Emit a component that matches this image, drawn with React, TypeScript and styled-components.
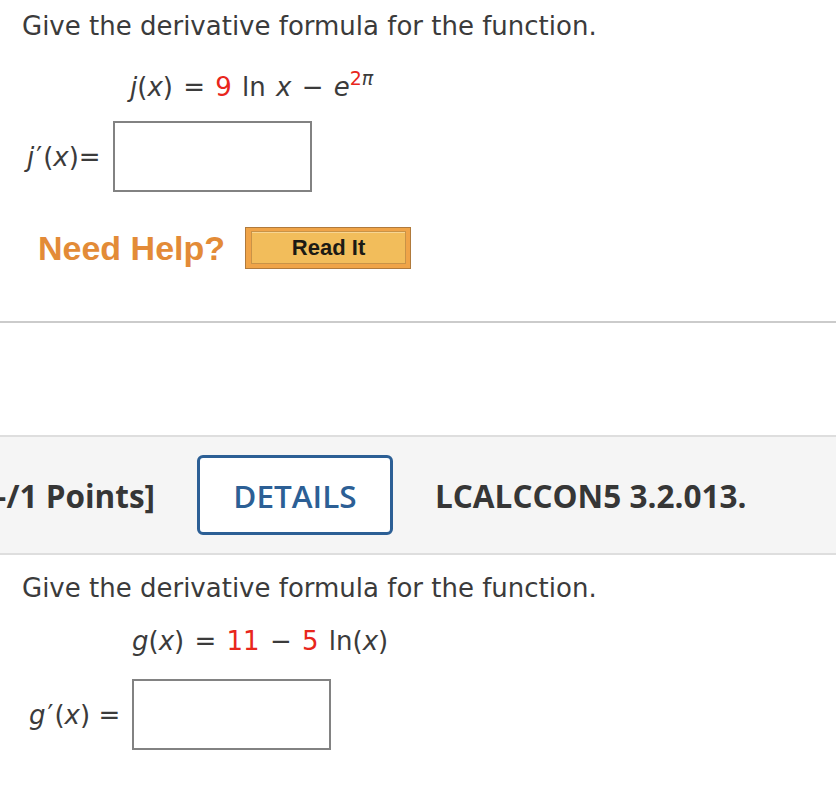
import React from "react";
import styled, { createGlobalStyle } from "styled-components";

const Global = createGlobalStyle`
  html, body { margin: 0; padding: 0; background: #fff; }
  body { font-family: "DejaVu Sans", Verdana, sans-serif; color: #3b3b3b; }
`;

const Page = styled.div`
  width: 836px;
  overflow: hidden;
`;

const Question = styled.section<{ $top: number }>`
  padding: ${(p) => p.$top}px 0 0 22px;
`;

const Prompt = styled.p`
  margin: 0;
  font-size: 26px;
  line-height: 32px;
`;

const Formula = styled.div<{ $indent: number; $gap: number }>`
  margin: ${(p) => p.$gap}px 0 0 ${(p) => p.$indent}px;
  font-size: 26px;
  line-height: 32px;
  word-spacing: 2px;
  white-space: nowrap;
`;

const I = styled.i`
  font-style: italic;
`;

const Prime = styled.span`
  margin: 0 1px 0 2px;
`;

const Red = styled.span`
  color: #e8261c;
`;

const Sup = styled.span`
  font-size: 19px;
  line-height: 0;
  vertical-align: 11px;
`;

const AnswerRow = styled.div<{ $indent: number; $gap: number; $top: number }>`
  display: flex;
  align-items: center;
  gap: ${(p) => p.$gap}px;
  margin: ${(p) => p.$top}px 0 0 ${(p) => p.$indent}px;
`;

const AnswerLabel = styled.span`
  font-size: 26px;
  white-space: nowrap;
`;

const AnswerBox = styled.div`
  width: 195px;
  height: 67px;
  border: 2px solid #828282;
  background: #fff;
`;

const HelpRow = styled.div`
  display: flex;
  align-items: center;
  gap: 20px;
  margin: 35px 0 0 38px;
`;

const HelpText = styled.span`
  font-family: "Liberation Sans", Arial, sans-serif;
  font-weight: bold;
  font-size: 34px;
  color: #e38b37;
`;

const ReadOuter = styled.div`
  width: 166px;
  height: 42px;
  box-sizing: border-box;
  border: 1px solid #b07a3c;
  background: #f0a448;
  padding: 3px 4px 4px 5px;
  display: flex;
`;

const ReadInner = styled.div`
  flex: 1;
  border: 1px solid #c99347;
  background: #f2bd5b;
  box-shadow: inset 0 1px 0 #f7d592;
  display: flex;
  align-items: center;
  justify-content: center;
  font-family: "Liberation Sans", Arial, sans-serif;
  font-weight: bold;
  font-size: 22px;
  color: #1c1a14;
`;

const Divider = styled.hr`
  margin: 52px 0 0 0;
  border: 0;
  border-top: 2px solid #cbcbcb;
`;

const Band = styled.div`
  margin-top: 112px;
  height: 116px;
  background: #f5f5f5;
  border-top: 2px solid #dedede;
  border-bottom: 2px solid #dedede;
  display: flex;
  align-items: center;
  font-family: "Open Sans", sans-serif;
  font-weight: 700;
  font-size: 31.5px;
  color: #363636;
  white-space: nowrap;
`;

const Points = styled.div`
  flex: 0 0 155px;
  display: flex;
  justify-content: flex-end;
  overflow: hidden;
`;

const DetailsButton = styled.div`
  margin-left: 42px;
  width: 196px;
  height: 80px;
  box-sizing: border-box;
  border: 3px solid #2c5f95;
  border-radius: 6px;
  background: #fff;
  display: flex;
  align-items: center;
  justify-content: center;
  color: #2c5f95;
  font-weight: 600;
`;

const Ref = styled.span`
  margin-left: 42px;
`;

export default function App() {
  return (
    <Page>
      <Global />
      <Question $top={10}>
        <Prompt>Give the derivative formula for the function.</Prompt>
        <Formula $indent={108} $gap={29}>
          <I>j</I>(<I>x</I>) = <Red>9</Red> ln <I>x</I> − <I>e</I>
          <Sup>
            <Red>2</Red>
            <I>π</I>
          </Sup>
        </Formula>
      </Question>
      <AnswerRow $indent={27} $gap={12} $top={18}>
        <AnswerLabel>
          <I>j</I>
          <Prime>′</Prime>(<I>x</I>)=
        </AnswerLabel>
        <AnswerBox />
      </AnswerRow>
      <HelpRow>
        <HelpText>Need Help?</HelpText>
        <ReadOuter>
          <ReadInner>Read It</ReadInner>
        </ReadOuter>
      </HelpRow>
      <Divider />
      <Band>
        <Points>
          <span>[–/1 Points]</span>
        </Points>
        <DetailsButton>DETAILS</DetailsButton>
        <Ref>LCALCCON5 3.2.013.</Ref>
      </Band>
      <Question $top={17}>
        <Prompt>Give the derivative formula for the function.</Prompt>
        <Formula $indent={110} $gap={21}>
          <I>g</I>(<I>x</I>) = <Red>11</Red> − <Red>5</Red> ln(<I>x</I>)
        </Formula>
      </Question>
      <AnswerRow $indent={29} $gap={12} $top={22}>
        <AnswerLabel>
          <I>g</I>
          <Prime>′</Prime>(<I>x</I>) =
        </AnswerLabel>
        <AnswerBox />
      </AnswerRow>
    </Page>
  );
}
